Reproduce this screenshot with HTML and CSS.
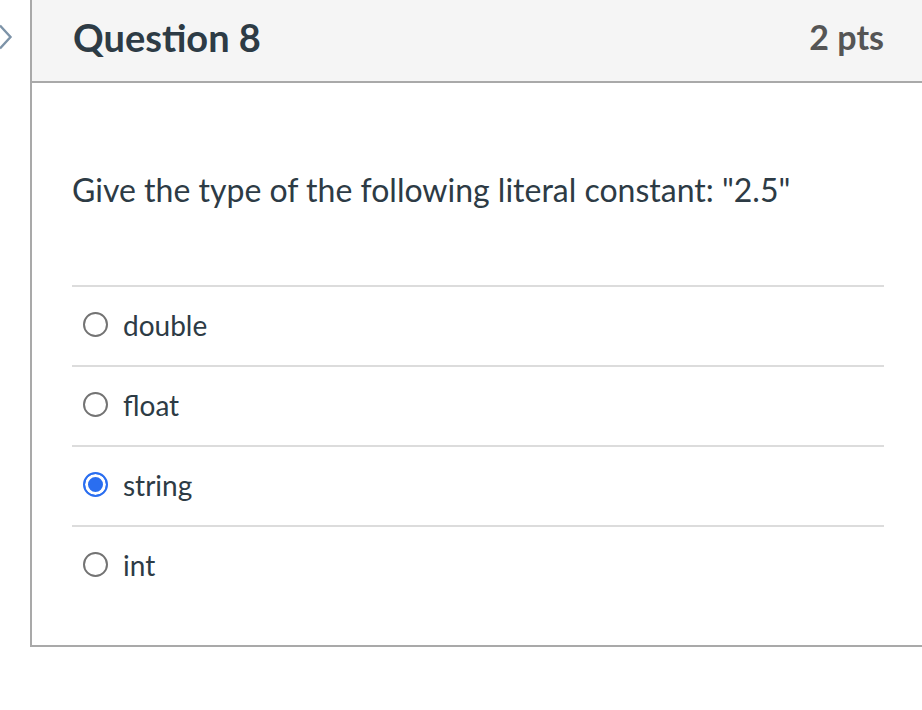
FILE: index.html
```html
<!DOCTYPE html>
<html>
<head>
<meta charset="utf-8">
<link rel="stylesheet" href="styles.css">
</head>
<body>
<div class="page">
  <div class="side">
    <svg class="chev" width="14" height="26" viewBox="0 0 14 26"><path d="M1 1.5 L11.5 13 L1 24.5" fill="none" stroke="#7d93a8" stroke-width="2.4"/></svg>
  </div>
  <div class="card">
    <div class="header">
      <h2 class="title">Question 8</h2>
      <span class="pts">2 pts</span>
    </div>
    <div class="content">
      <p class="question">Give the type of the following literal constant: "2.5"</p>
      <div class="answers">
        <div class="answer"><span class="radio"></span><span class="label">double</span></div>
        <div class="answer"><span class="radio"></span><span class="label">float</span></div>
        <div class="answer"><span class="radio checked"></span><span class="label">string</span></div>
        <div class="answer"><span class="radio"></span><span class="label">int</span></div>
      </div>
    </div>
  </div>
</div>
</body>
</html>
```
FILE: styles.css
```css
html, body {
  margin: 0;
  padding: 0;
  background: #fff;
}
body {
  font-family: Lato, "Open Sans", sans-serif;
  color: #2d3b45;
}
.page {
  display: flex;
  align-items: flex-start;
}
.side {
  width: 30px;
  flex: 0 0 30px;
  position: relative;
  height: 80px;
}
.chev {
  position: absolute;
  left: -1px;
  top: 24px;
}
.card {
  flex: 1;
  border-left: 2px solid #a9a9a9;
  border-bottom: 2px solid #a9a9a9;
}
.header {
  background: #f5f5f5;
  border-bottom: 2px solid #a9a9a9;
  display: flex;
  align-items: center;
  justify-content: space-between;
  padding: 0 38px 7px 41px;
  box-sizing: border-box;
  height: 83px;
}
.title {
  margin: 0;
  font-size: 38px;
  font-weight: 700;
  line-height: 1;
  color: #2d3b45;
}
.pts {
  font-size: 34px;
  font-weight: 700;
  line-height: 1;
  color: #555;
}
.content {
  padding: 0 38px 40px 40px;
}
.question {
  margin: 0;
  padding-top: 87px;
  line-height: 40px;
  font-size: 32px;
  height: 40px;
  margin-bottom: 75px;
}
.answer {
  border-top: 2px solid #dcdcdc;
  height: 78px;
  box-sizing: border-box;
  height: 80px;
  padding-bottom: 3px;
  display: flex;
  align-items: center;
  padding-left: 11px;
}
.radio {
  width: 21px;
  height: 21px;
  border: 2px solid #737373;
  border-radius: 50%;
  box-sizing: content-box;
  margin-right: 15px;
  flex: 0 0 auto;
}
.radio.checked {
  border-color: #2a6ef0;
  background: #2a6ef0;
  box-shadow: inset 0 0 0 3px #fff;
}
.label {
  font-size: 28px;
}
```
